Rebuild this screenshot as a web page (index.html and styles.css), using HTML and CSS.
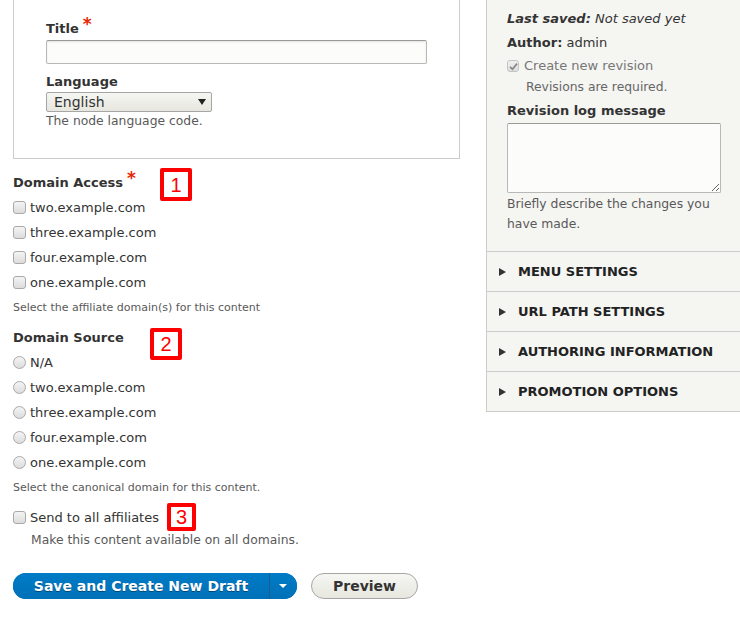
FILE: index.html
```html
<!DOCTYPE html>
<html lang="en">
<head>
    <meta charset="UTF-8">
    <meta name="viewport" content="width=device-width, initial-scale=1.0">
    <title>Create Article</title>
    <link rel="stylesheet" href="styles.css">
</head>
<body>

<div class="page">
    <main class="main">
        <div class="fieldset">
            <div class="form-item">
                <label class="label required" for="title">Title</label>
                <input type="text" id="title" class="text-input">
            </div>
            <div class="form-item form-item--language">
                <label class="label" for="langcode">Language</label>
                <span class="select-wrap">
                    <select id="langcode" class="select">
                        <option>English</option>
                    </select>
                </span>
                <div class="description">The node language code.</div>
            </div>
        </div>

        <div class="form-item form-item--access">
            <div class="label required">Domain Access</div>
            <label class="option"><input type="checkbox" class="checkbox"> two.example.com</label>
            <label class="option"><input type="checkbox" class="checkbox"> three.example.com</label>
            <label class="option"><input type="checkbox" class="checkbox"> four.example.com</label>
            <label class="option"><input type="checkbox" class="checkbox"> one.example.com</label>
            <div class="description description--small">Select the affiliate domain(s) for this content</div>
            <span class="marker marker--one">1</span>
        </div>

        <div class="form-item form-item--source">
            <div class="label">Domain Source</div>
            <label class="option"><input type="radio" name="source" class="radio"> N/A</label>
            <label class="option"><input type="radio" name="source" class="radio"> two.example.com</label>
            <label class="option"><input type="radio" name="source" class="radio"> three.example.com</label>
            <label class="option"><input type="radio" name="source" class="radio"> four.example.com</label>
            <label class="option"><input type="radio" name="source" class="radio"> one.example.com</label>
            <div class="description description--small">Select the canonical domain for this content.</div>
            <span class="marker marker--two">2</span>
        </div>

        <div class="form-item form-item--all">
            <label class="option"><input type="checkbox" class="checkbox"> Send to all affiliates</label>
            <div class="description description--indent">Make this content available on all domains.</div>
            <span class="marker marker--three">3</span>
        </div>

        <div class="actions">
            <div class="dropbutton">
                <button type="button" class="button button--primary">Save and Create New Draft</button>
                <button type="button" class="button button--toggle"><span class="toggle-arrow"></span></button>
            </div>
            <button type="button" class="button">Preview</button>
        </div>
    </main>

    <aside class="sidebar">
        <div class="meta">
            <p class="meta-line"><em><strong>Last saved:</strong> Not saved yet</em></p>
            <p class="meta-line meta-line--author"><strong>Author:</strong> admin</p>
            <div class="revision">
                <span class="fake-check">
                    <svg width="9" height="9" viewBox="0 0 9 9"><path d="M1 4.8 L3.5 7.2 L8 1.6" fill="none" stroke="#8a8a8a" stroke-width="1.8"/></svg>
                </span>
                Create new revision
            </div>
            <div class="revision-note">Revisions are required.</div>
            <label class="label label--log" for="log">Revision log message</label>
            <textarea id="log" class="textarea"></textarea>
            <div class="description description--sidebar">Briefly describe the changes you have made.</div>
        </div>
        <div class="details"><span class="summary-arrow"></span>Menu settings</div>
        <div class="details"><span class="summary-arrow"></span>URL path settings</div>
        <div class="details"><span class="summary-arrow"></span>Authoring information</div>
        <div class="details details--last"><span class="summary-arrow"></span>Promotion options</div>
    </aside>
</div>

</body>
</html>
```

FILE: styles.css
```css
body {
    margin: 0;
    font-family: "DejaVu Sans", sans-serif;
    font-size: 13px;
    line-height: 18px;
    color: #333;
    background: #fff;
}
.page {
    display: grid;
    grid-template-columns: 447px 1fr;
    column-gap: 26px;
    align-items: start;
    padding-left: 13px;
}
.fieldset {
    border: 1px solid #ccc;
    border-top: none;
    padding: 20px 32px 28px;
}
.form-item {
    position: relative;
}
.label {
    display: block;
    height: 18px;
    font-weight: bold;
}
.required::after {
    content: "*";
    color: #e62600;
    font-size: 17px;
    line-height: 0;
    margin-left: 4px;
    position: relative;
    top: -3px;
}
.text-input {
    display: block;
    box-sizing: border-box;
    width: 381px;
    height: 24px;
    margin-top: 2px;
    border: 1px solid #b8b8b8;
    border-top-color: #999;
    border-radius: 2px;
    background: #fcfcfa;
    box-shadow: inset 0 1px 2px rgba(0, 0, 0, 0.1);
}
.form-item--language {
    margin-top: 9px;
}
.select-wrap {
    display: block;
    position: relative;
    width: 166px;
    margin-top: 1px;
}
.select-wrap::after {
    content: "";
    position: absolute;
    right: 6px;
    top: 7px;
    border-left: 4px solid transparent;
    border-right: 4px solid transparent;
    border-top: 6px solid #222;
    pointer-events: none;
}
.select {
    -webkit-appearance: none;
    appearance: none;
    display: block;
    box-sizing: border-box;
    width: 166px;
    height: 20px;
    margin: 0;
    padding: 0 0 0 7px;
    font-family: "DejaVu Sans", sans-serif;
    font-size: 14px;
    line-height: 18px;
    color: #333;
    border: 1px solid #a6a6a6;
    border-radius: 2px;
    background: linear-gradient(to bottom, #f6f6f3, #e7e7df);
}
.description {
    font-size: 12.35px;
    line-height: 18px;
    color: #595959;
}
.description--small {
    font-size: 11px;
    margin-top: 4px;
}
.description--indent {
    margin-top: 1px;
    padding-left: 18px;
}
.form-item--access {
    margin-top: 15px;
}
.form-item--access .label,
.form-item--source .label {
    margin-bottom: 3px;
}
.form-item--source {
    margin-top: 12px;
}
.form-item--all {
    margin-top: 8px;
}
.option {
    display: flex;
    align-items: center;
    height: 25px;
    gap: 4px;
}
.checkbox,
.radio {
    -webkit-appearance: none;
    appearance: none;
    box-sizing: border-box;
    width: 13px;
    height: 13px;
    margin: 0 0 1px;
    border: 1px solid #a9a9a9;
    background: linear-gradient(to bottom, #f4f4f4, #dcdcdc);
}
.checkbox {
    border-radius: 3px;
}
.radio {
    border-radius: 50%;
}
.marker {
    position: absolute;
    box-sizing: border-box;
    display: flex;
    align-items: center;
    justify-content: center;
    width: 32px;
    height: 33px;
    border: 4px solid #f00;
    border-radius: 2px;
    background: #fff;
    color: #f00;
    font-family: "Liberation Sans", Arial, sans-serif;
    font-size: 20px;
}
.marker--one {
    left: 147px;
    top: -6px;
}
.marker--two {
    left: 137px;
    top: -1px;
    height: 32px;
}
.marker--three {
    left: 154px;
    top: -2px;
    width: 29px;
    height: 28px;
}
.actions {
    display: flex;
    align-items: center;
    gap: 14px;
    margin-top: 24px;
}
.button {
    box-sizing: border-box;
    height: 26px;
    padding: 0 21px;
    font-family: "DejaVu Sans", sans-serif;
    font-size: 14px;
    font-weight: bold;
    color: #333;
    border: 1px solid #a6a6a6;
    border-radius: 20em;
    background: linear-gradient(to bottom, #f6f6f3, #e7e7df);
    cursor: pointer;
}
.dropbutton {
    display: flex;
    height: 26px;
    border-radius: 20em;
    overflow: hidden;
    background: #0071b8;
}
.button--primary {
    width: 257px;
    padding: 0;
    color: #fff;
    border: none;
    border-radius: 0;
    border-right: 1px solid #1e5c90;
    background: linear-gradient(to bottom, #007bc6, #0071b8);
    text-shadow: 0 1px rgba(0, 0, 0, 0.4);
}
.button--toggle {
    width: 27px;
    padding: 0 2px 0 0;
    border: none;
    border-radius: 0;
    background: linear-gradient(to bottom, #007bc6, #0071b8);
    display: flex;
    align-items: center;
    justify-content: center;
}
.toggle-arrow {
    border-left: 4px solid transparent;
    border-right: 4px solid transparent;
    border-top: 4px solid #fff;
}
.sidebar {
    background: #f5f5f2;
    border-left: 1px solid #ccc;
}
.meta {
    padding: 10px 20px 17px;
}
.meta-line {
    margin: 0;
}
.meta-line--author {
    margin-top: 6px;
}
.revision {
    display: flex;
    align-items: center;
    gap: 5px;
    margin-top: 5px;
    color: #777;
}
.fake-check {
    box-sizing: border-box;
    width: 12px;
    height: 12px;
    border: 1px solid #c4c4c4;
    border-radius: 3px;
    background: linear-gradient(to bottom, #f0f0f0, #dedede);
    display: flex;
    align-items: center;
    justify-content: center;
}
.revision-note {
    margin-top: 3px;
    padding-left: 19px;
    font-size: 12.35px;
    color: #666;
}
.label--log {
    margin-top: 6px;
}
.textarea {
    display: block;
    box-sizing: border-box;
    width: 214px;
    height: 70px;
    margin: 3px 0 0;
    border: 1px solid #b8b8b8;
    border-top-color: #999;
    border-radius: 2px;
    background: #fcfcfa;
}
.description--sidebar {
    margin-top: 1px;
    line-height: 20px;
}
.details {
    box-sizing: border-box;
    height: 40px;
    display: flex;
    align-items: center;
    padding-left: 12px;
    border-top: 1px solid #ccc;
    font-weight: bold;
    text-transform: uppercase;
    color: #222;
}
.details--last {
    height: 41px;
    border-bottom: 1px solid #ccc;
}
.summary-arrow {
    border-left: 7px solid #333;
    border-top: 4px solid transparent;
    border-bottom: 4px solid transparent;
    margin-right: 12px;
}
```
